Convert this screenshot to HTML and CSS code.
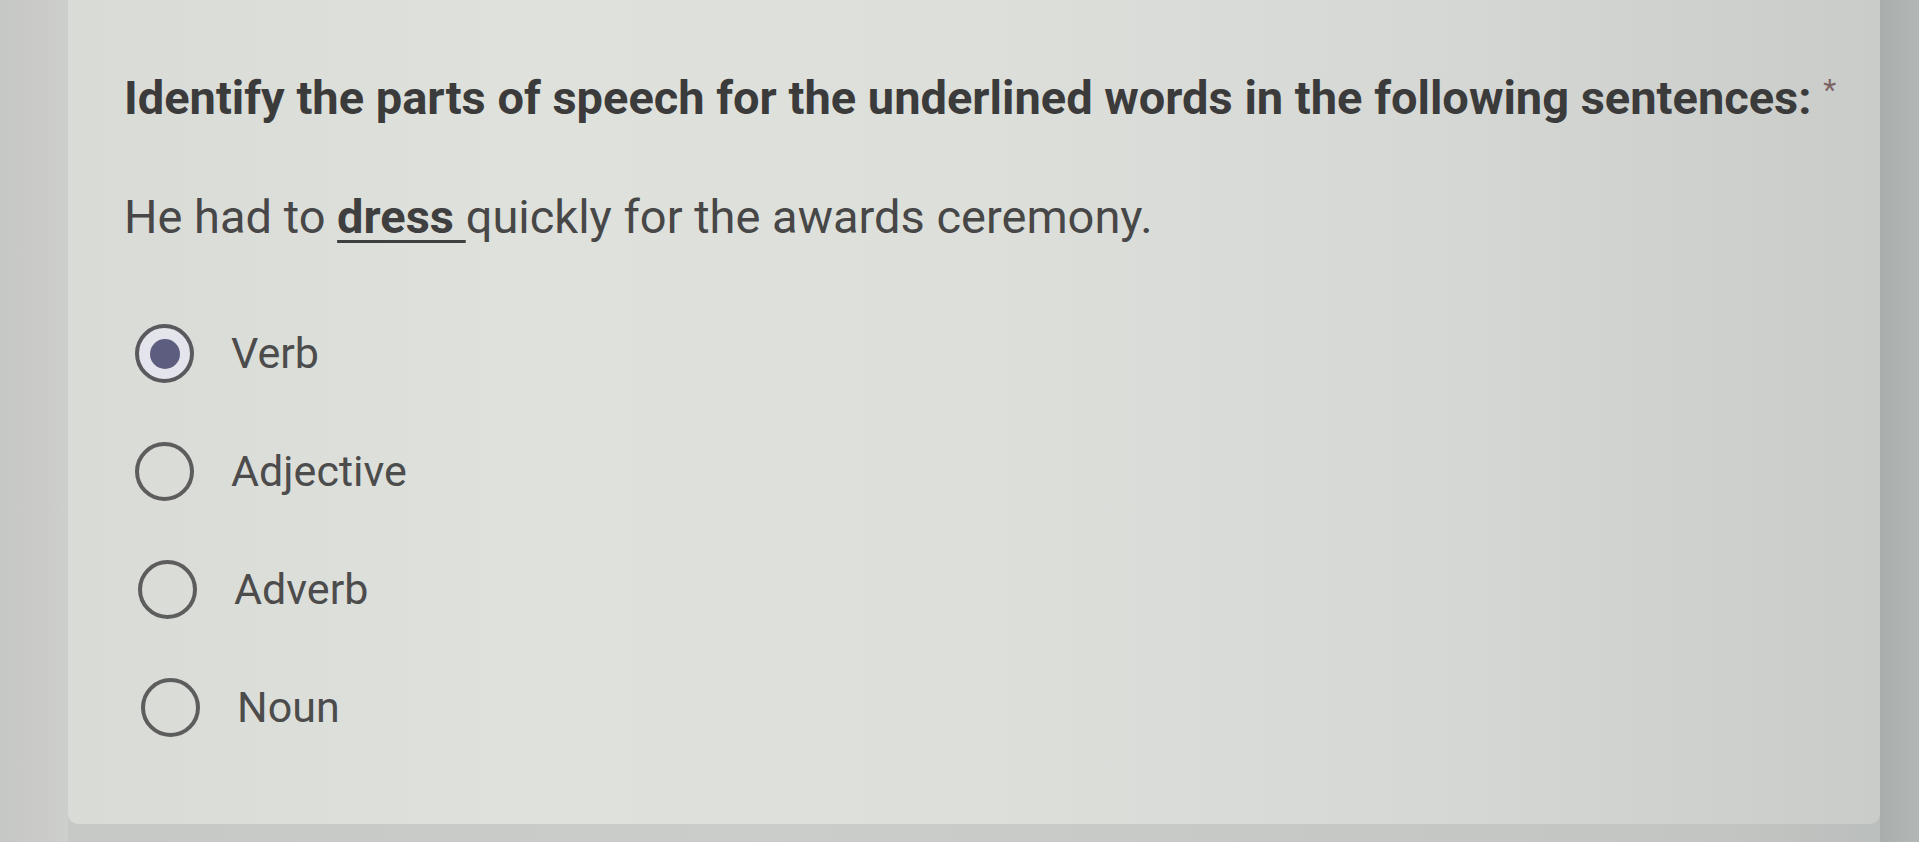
FILE: index.html
```html
<!DOCTYPE html>
<html lang="en">
<head>
<meta charset="utf-8">
<title>Question</title>
<link rel="stylesheet" href="styles.css">
</head>
<body>
<div class="screen">
  <div class="left-strip"></div>
  <div class="card">
    <div class="title">Identify the parts of speech for the underlined words in the following sentences: <span class="req">*</span></div>
    <div class="sentence">He had to <span class="ul">dress </span>quickly for the awards ceremony.</div>
    <div class="options">
      <div class="option"><span class="radio checked"></span><span class="label">Verb</span></div>
      <div class="option"><span class="radio"></span><span class="label">Adjective</span></div>
      <div class="option shift-1"><span class="radio"></span><span class="label">Adverb</span></div>
      <div class="option shift-2"><span class="radio"></span><span class="label">Noun</span></div>
    </div>
  </div>
  <div class="right-strip"></div>
</div>
</body>
</html>
```
FILE: styles.css
```css
html, body {
  margin: 0;
  padding: 0;
}
body {
  width: 1919px;
  height: 842px;
  overflow: hidden;
  font-family: Roboto, "Liberation Sans", sans-serif;
  background: #c4c7c4;
}
.screen {
  display: flex;
  height: 842px;
  background: linear-gradient(90deg, #c6c8c5 0%, #cbcdca 40%, #c2c5c2 90%, #b9bdbb 100%);
}
.left-strip {
  flex: 0 0 68px;
  background: linear-gradient(90deg, #c6c8c5 0%, #cacbc8 60%, #cdcfcc 100%);
}
.card {
  flex: 0 0 1812px;
  height: 824px;
  box-sizing: border-box;
  padding: 66px 0 0 56px;
  border-radius: 0 0 10px 10px;
  background: linear-gradient(90deg, #d9dbd7 0%, #dfe1dc 25%, #dddfdb 50%, #d5d8d4 75%, #c9ccc9 100%);
  display: flex;
  flex-direction: column;
}
.right-strip {
  flex: 1;
  background: linear-gradient(90deg, #a9adac 0%, #b3b7b6 100%);
}
.title {
  font-size: 47px;
  line-height: 47px;
  font-weight: 700;
  color: #3b3b3b;
  white-space: nowrap;
}
.req {
  font-size: 30px;
  vertical-align: 14px;
  font-weight: 400;
  color: #7d6464;
}
.sentence {
  margin-top: 72px;
  font-size: 47px;
  line-height: 47px;
  color: #474747;
  white-space: nowrap;
}
.ul {
  font-weight: 700;
  text-decoration: underline;
  text-decoration-thickness: 3px;
  text-underline-offset: 7px;
  color: #3f3f3f;
}
.options {
  margin-top: 84px;
  display: flex;
  flex-direction: column;
  gap: 59px;
}
.option {
  display: flex;
  align-items: center;
  gap: 37px;
  padding-left: 11px;
}
.option.shift-1 {
  padding-left: 14px;
}
.option.shift-2 {
  padding-left: 17px;
}
.radio {
  width: 59px;
  height: 59px;
  box-sizing: border-box;
  border: 4px solid #5d5d5d;
  border-radius: 50%;
  display: flex;
  align-items: center;
  justify-content: center;
  flex: 0 0 59px;
}
.radio.checked {
  border-color: #5a5a5e;
  background: #e4e4ec;
}
.radio.checked::after {
  content: "";
  width: 30px;
  height: 30px;
  border-radius: 50%;
  background: #5d5d80;
}
.label {
  font-size: 43px;
  line-height: 43px;
  color: #4c4c4c;
}
```
